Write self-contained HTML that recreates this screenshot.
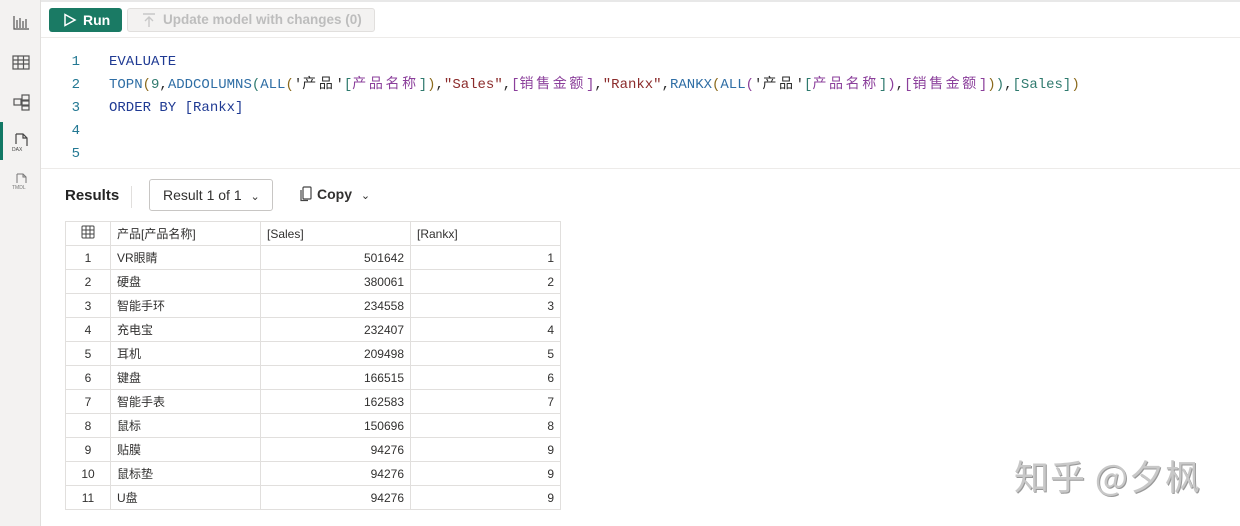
<!DOCTYPE html>
<html><head><meta charset="utf-8"><style>
*{margin:0;padding:0;box-sizing:border-box}
body{width:1240px;height:526px;background:#fff;font-family:"Segoe UI","Liberation Sans","Noto Sans CJK SC",sans-serif;position:relative;overflow:hidden;color:#242424}
.side{position:absolute;left:0;top:0;width:41px;height:526px;background:#f3f2f1;border-right:1px solid #e1dfdd}
.ic{position:absolute;left:11px;width:20px;height:20px}
.sel{position:absolute;left:0;top:122px;width:3px;height:38px;background:#117865}
.top{position:absolute;left:41px;top:0;right:0;height:38px;border-bottom:1px solid #edebe9;border-top:2px solid #e8e8e8}
.run{position:absolute;left:49px;top:8px;width:73px;height:24px;background:#1a7a64;border-radius:3px;color:#fff;font-weight:bold;font-size:14px;line-height:24px;padding-left:34px}
.upd{position:absolute;left:127px;top:8px;width:248px;height:24px;background:#f3f2f1;border:1px solid #e1dfdd;border-radius:3px;color:#bdbdbd;font-weight:bold;font-size:13.5px;line-height:22px;padding-left:35px}
.code{position:absolute;top:51px;font-family:"Liberation Mono","Noto Sans CJK SC",monospace;font-size:14px;line-height:23px;white-space:pre}
.ln{left:60px;color:#237893;width:20px;text-align:right}
.src{left:109px;color:#1f3a93}
.k{letter-spacing:2.6px}
.f{color:#2f6ea5}.s{color:#8b2b2b}.c{color:#8b3f9b}.t{color:#2a2a2a}.p{color:#8b6a1c}.m{color:#2f7a6e}
.div{position:absolute;left:41px;right:0;top:168px;border-top:1px solid #edebe9}
.res{position:absolute;left:65px;top:187px;font-size:15px;font-weight:600;color:#242424}
.sep{position:absolute;left:131px;top:186px;width:1px;height:22px;background:#e1dfdd}
.dd{position:absolute;left:149px;top:179px;width:124px;height:32px;border:1px solid #c8c6c4;border-radius:3px;font-size:14px;line-height:30px;padding-left:13px;color:#323130}
.copy{position:absolute;left:300px;top:186px;font-size:14px;color:#323130}
table{position:absolute;left:65px;top:221px;border-collapse:collapse;font-size:12px;color:#323130}
td{border:1px solid #e1dfdd;height:24px;padding:0 6px}
td.n{width:45px;text-align:center}
td.a{width:150px}td.b{width:150px;text-align:right}td.r{width:150px;text-align:right}
tr.h td.b,tr.h td.r{text-align:left}
.wm{position:absolute;left:1014px;top:450px;font-size:35px;color:#c8c8c8;letter-spacing:1px;font-family:"Noto Sans CJK SC",sans-serif;text-shadow:1px 1px 0 #999}
</style></head><body>
<div class="side">
<svg class="ic" style="top:12px" viewBox="0 0 20 20" fill="none" stroke="#555" stroke-width="1.2"><path d="M3 4v13h15M6 8v8M9 6v10M12 9v7M15 7v9"/></svg>
<svg class="ic" style="top:52px" viewBox="0 0 20 20" fill="none" stroke="#555" stroke-width="1.2"><rect x="2" y="4" width="16" height="13"/><path d="M2 8h16M2 12h16M7 4v13M12.5 4v13"/></svg>
<svg class="ic" style="top:92px" viewBox="0 0 20 20" fill="none" stroke="#555" stroke-width="1.2"><rect x="3" y="7" width="7" height="6"/><rect x="11" y="3" width="7" height="5"/><rect x="11" y="9" width="7" height="4"/><rect x="11" y="14" width="7" height="4"/></svg>
<div class="sel"></div>
<svg class="ic" style="top:132px" viewBox="0 0 20 20" fill="none" stroke="#444" stroke-width="1.2"><path d="M5 2h7l4 4v8M5 2v10M12 2v4h4"/><text x="1" y="19" font-size="5" fill="#444" stroke="none" font-family="Liberation Sans">DAX</text></svg>
<svg class="ic" style="top:172px" viewBox="0 0 20 20" fill="none" stroke="#777" stroke-width="1"><path d="M6 2h6l3 3v6M6 2v9M12 2v3h3"/><text x="1" y="17" font-size="5" fill="#777" stroke="none" font-family="Liberation Sans">TMDL</text></svg>
</div>
<div class="top"></div>
<div class="run"><svg style="position:absolute;left:14px;top:5px" width="14" height="14" viewBox="0 0 14 14"><path d="M2 1.5l10 5.5-10 5.5z" fill="none" stroke="#fff" stroke-width="1.5"/></svg>Run</div>
<div class="upd"><svg style="position:absolute;left:14px;top:4px" width="14" height="15" viewBox="0 0 14 15" fill="none" stroke="#c8c8c8" stroke-width="1.4"><path d="M1 1h12M7 14V4M3 8l4-4 4 4"/></svg>Update model with changes (0)</div>
<div class="code ln">1
2
3
4
5</div>
<div class="code src">EVALUATE
<span class="f">TOPN</span><span class="p">(</span><span class="m">9</span><span class="t">,</span><span class="f">ADDCOLUMNS</span><span class="m">(</span><span class="f">ALL</span><span class="p">(</span><span class="t">'<span class="k">产品</span>'</span><span class="m">[</span><span class="c k">产品名称</span><span class="m">]</span><span class="p">)</span><span class="t">,</span><span class="s">"Sales"</span><span class="t">,</span><span class="c">[<span class="k">销售金额</span>]</span><span class="t">,</span><span class="s">"Rankx"</span><span class="t">,</span><span class="f">RANKX</span><span class="p">(</span><span class="f">ALL</span><span class="c">(</span><span class="t">'<span class="k">产品</span>'</span><span class="m">[</span><span class="c k">产品名称</span><span class="m">]</span><span class="c">)</span><span class="t">,</span><span class="c">[<span class="k">销售金额</span>]</span><span class="p">)</span><span class="m">)</span><span class="t">,</span><span class="m">[Sales]</span><span class="p">)</span>
ORDER BY [Rankx]</div>
<div class="div"></div>
<div class="res">Results</div>
<div class="sep"></div>
<div class="dd">Result 1 of 1 <span style="font-size:11px;margin-left:5px">&#8964;</span></div>
<div class="copy"><svg style="vertical-align:-3px;margin-right:5px" width="12" height="16" viewBox="0 0 12 16" fill="none" stroke="#444" stroke-width="1.2"><rect x="3" y="1" width="8" height="12" rx="1"/><path d="M1 4v10.5h7"/></svg><b style="font-weight:600">Copy</b> <span style="font-size:11px;margin-left:5px">&#8964;</span></div>
<table>
<tr class="h"><td class="n"><svg width="14" height="14" viewBox="0 0 14 14" fill="none" stroke="#444" stroke-width="1"><rect x="1" y="1" width="12" height="12" rx="1"/><path d="M1 5h12M1 9h12M5 1v12M9 1v12"/></svg></td><td class="a">产品[产品名称]</td><td class="b">[Sales]</td><td class="r">[Rankx]</td></tr>
<tr><td class="n">1</td><td class="a">VR眼睛</td><td class="b">501642</td><td class="r">1</td></tr>
<tr><td class="n">2</td><td class="a">硬盘</td><td class="b">380061</td><td class="r">2</td></tr>
<tr><td class="n">3</td><td class="a">智能手环</td><td class="b">234558</td><td class="r">3</td></tr>
<tr><td class="n">4</td><td class="a">充电宝</td><td class="b">232407</td><td class="r">4</td></tr>
<tr><td class="n">5</td><td class="a">耳机</td><td class="b">209498</td><td class="r">5</td></tr>
<tr><td class="n">6</td><td class="a">键盘</td><td class="b">166515</td><td class="r">6</td></tr>
<tr><td class="n">7</td><td class="a">智能手表</td><td class="b">162583</td><td class="r">7</td></tr>
<tr><td class="n">8</td><td class="a">鼠标</td><td class="b">150696</td><td class="r">8</td></tr>
<tr><td class="n">9</td><td class="a">贴膜</td><td class="b">94276</td><td class="r">9</td></tr>
<tr><td class="n">10</td><td class="a">鼠标垫</td><td class="b">94276</td><td class="r">9</td></tr>
<tr><td class="n">11</td><td class="a">U盘</td><td class="b">94276</td><td class="r">9</td></tr>
</table>
<div class="wm">知乎 @夕枫</div>
</body></html>
